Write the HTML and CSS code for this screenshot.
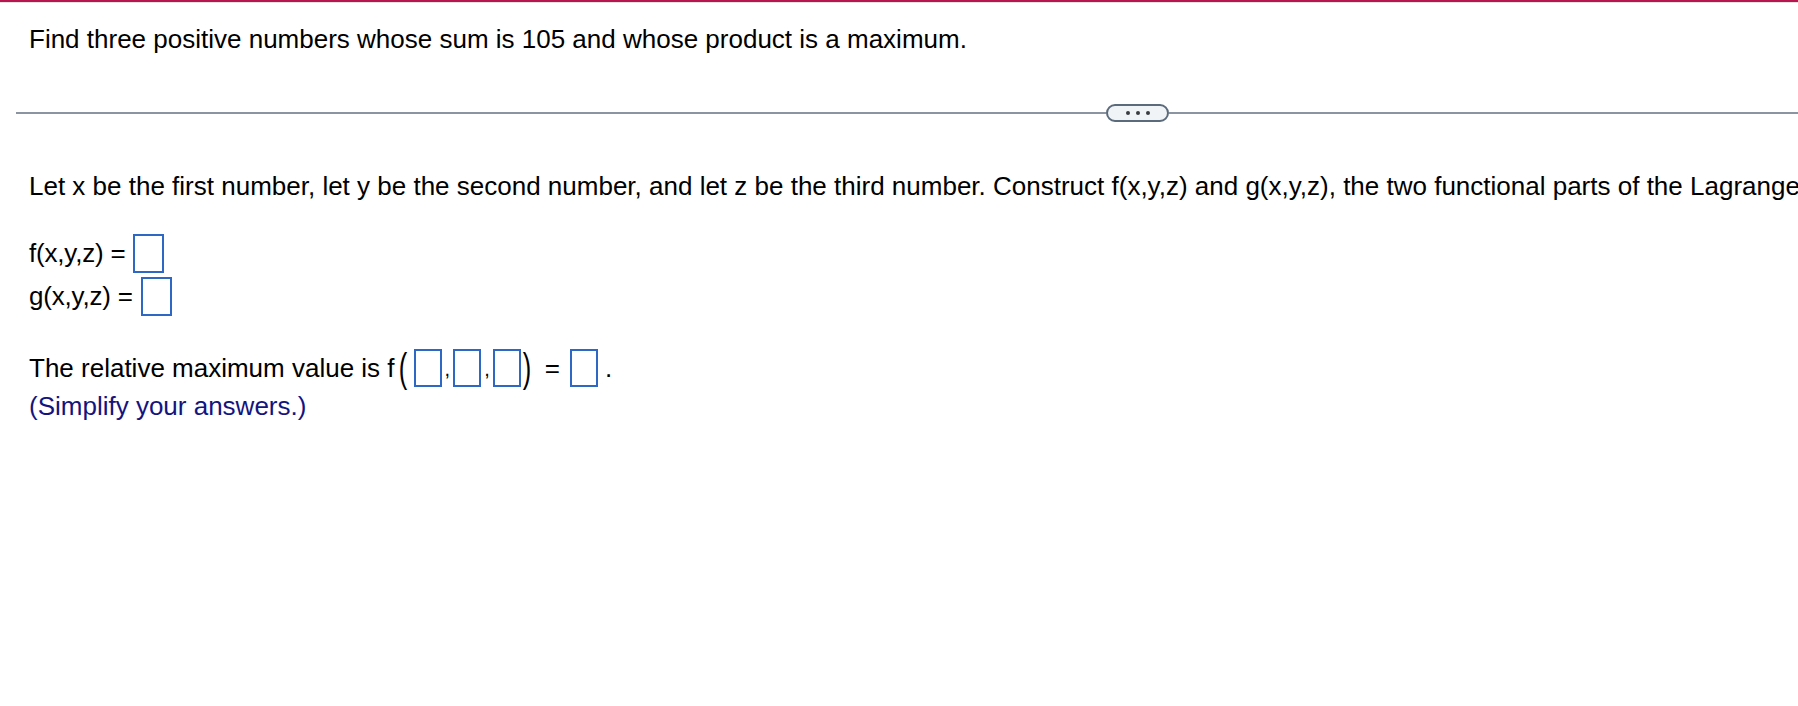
FILE: index.html
```html
<!DOCTYPE html>
<html>
<head>
<meta charset="utf-8">
<link rel="stylesheet" href="styles.css">
</head>
<body>
<div class="topbar"></div>
<p class="question">Find three positive numbers whose sum is 105 and whose product is a maximum.</p>
<div class="divider">
  <div class="rule rule-left"></div>
  <div class="pill"><span class="dot"></span><span class="dot"></span><span class="dot"></span></div>
  <div class="rule rule-right"></div>
</div>
<div class="content">
  <p class="lead">Let x be the first number, let y be the second number, and let z be the third number. Construct f(x,y,z) and g(x,y,z), the two functional parts of the Lagrange</p>
  <div class="eq eq-f"><span class="math">f(x,y,z) =</span><span class="box"></span></div>
  <div class="eq eq-g"><span class="math">g(x,y,z) =</span><span class="box"></span></div>
  <div class="eq eq-max">
    <span class="txt">The relative maximum value is f</span>
    <span class="paren lp">(</span>
    <span class="box box-s"></span><span class="comma">,</span>
    <span class="box box-s"></span><span class="comma">,</span>
    <span class="box box-s"></span>
    <span class="paren rp">)</span>
    <span class="equals">=</span>
    <span class="box box-s"></span>
    <span class="period">.</span>
  </div>
  <p class="hint">(Simplify your answers.)</p>
</div>
</body>
</html>
```

FILE: styles.css
```css
html, body {
  margin: 0;
  padding: 0;
  background: #ffffff;
}
body {
  font-family: "Liberation Sans", Arial, sans-serif;
  color: #000;
  font-size: 26px;
  overflow: hidden;
  width: 1798px;
  height: 706px;
}
.topbar {
  height: 2px;
  background: #b8164e;
  border-bottom: 1px solid #e3e3e3;
}
.question {
  margin: 21px 0 0 0;
  padding-left: 29px;
  line-height: 30px;
  white-space: nowrap;
}
.divider {
  display: flex;
  align-items: center;
  margin-top: 50px;
  margin-left: 16px;
  height: 18px;
}
.rule {
  height: 2px;
  background: #8b95a1;
}
.rule-left {
  width: 1090px;
}
.rule-right {
  flex: 1;
}
.pill {
  box-sizing: border-box;
  width: 63px;
  height: 18px;
  border: 2px solid #5b6b7b;
  border-radius: 9px;
  background: #f1f4f6;
  display: flex;
  align-items: center;
  justify-content: center;
  gap: 6px;
}
.dot {
  width: 4px;
  height: 4px;
  border-radius: 50%;
  background: #3a3e43;
}
.content {
  padding-left: 29px;
  overflow: hidden;
}
.lead {
  margin: 49px 0 0 0;
  line-height: 30px;
  white-space: nowrap;
}
.eq {
  display: flex;
  align-items: center;
  white-space: nowrap;
}
.eq-f {
  margin-top: 33px;
}
.eq-g {
  margin-top: 4px;
}
.math {
  letter-spacing: -0.2px;
  margin-right: 8px;
}
.box {
  box-sizing: border-box;
  display: inline-block;
  width: 31px;
  height: 39px;
  border: 2px solid #2f67c4;
  background: #fff;
}
.eq-max {
  margin-top: 33px;
  height: 38px;
}
.box-s {
  width: 28px;
  height: 38px;
}
.paren {
  font-size: 30px;
  font-weight: 300;
  transform: scaleY(1.35) scaleX(0.85);
  line-height: 38px;
  display: inline-block;
}
.lp {
  margin-left: 3px;
  margin-right: 6px;
}
.rp {
  margin-left: 1px;
}
.comma {
  align-self: flex-end;
  font-size: 20px;
  line-height: 24px;
  margin: 0 3px;
  position: relative;
  top: -6px;
}
.equals {
  margin: 0 10px 0 13px;
}
.period {
  margin-left: 7px;
  align-self: flex-end;
  line-height: 24px;
  position: relative;
  top: -7px;
}
.hint {
  margin: 4px 0 0 0;
  line-height: 30px;
  color: #14147f;
}
```
